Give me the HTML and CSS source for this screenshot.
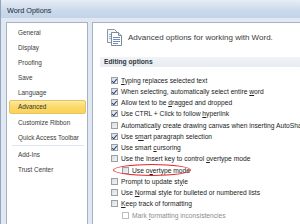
FILE: index.html
```html
<!DOCTYPE html>
<html>
<head>
<meta charset="utf-8">
<link rel="stylesheet" href="styles.css">
</head>
<body>
<div class="window">
  <div class="titlebar"><span class="title">Word Options</span></div>
  <div class="body">
    <nav class="nav">
      <div class="item">General</div>
      <div class="item">Display</div>
      <div class="item">Proofing</div>
      <div class="item">Save</div>
      <div class="item">Language</div>
      <div class="item active">Advanced</div>
      <div class="item">Customize Ribbon</div>
      <div class="item">Quick Access Toolbar</div>
      <div class="sep"></div>
      <div class="item">Add-Ins</div>
      <div class="item">Trust Center</div>
    </nav>
    <main class="pane">
      <div class="head">
        <svg class="docicon" width="17" height="19" viewBox="0 0 17 19">
          <path d="M1.5 1.5h7l3 3v10h-10z" fill="#f4f6f9" stroke="#8c96a4"/>
          <path d="M5.5 4.5h7l3 3v10h-10z" fill="#ffffff" stroke="#7d8898"/>
          <path d="M12.5 4.5v3h3" fill="#e6eaf0" stroke="#7d8898"/>
          <path d="M7 9.5h7M7 11.5h7M7 13.5h7M7 15.5h5" stroke="#6f8fc0" stroke-width="1"/>
          <path d="M3 6.5h2M3 8.5h2M3 10.5h2" stroke="#9fb2cf" stroke-width="1"/>
        </svg>
        <span class="headtext">Advanced options for working with Word.</span>
      </div>
      <div class="section">Editing options</div>
      <ul class="opts">
        <li class="opt"><span class="cb on"></span><span><u>T</u>yping replaces selected text</span></li>
        <li class="opt"><span class="cb on"></span><span>When selecting, automatically select entire <u>w</u>ord</span></li>
        <li class="opt"><span class="cb on"></span><span>Allow text to be <u>d</u>ragged and dropped</span></li>
        <li class="opt"><span class="cb on"></span><span>Use CTRL + Click to follow <u>h</u>yperlink</span></li>
        <li class="opt"><span class="cb"></span><span>Automatical<u>l</u>y create drawing canvas when inserting AutoShapes</span></li>
        <li class="opt"><span class="cb on"></span><span>Use s<u>m</u>art paragraph selection</span></li>
        <li class="opt"><span class="cb on"></span><span>Use smart <u>c</u>ursoring</span></li>
        <li class="opt"><span class="cb"></span><span>Use the Insert key to control <u>o</u>vertype mode</span></li>
        <li class="opt sub circled"><span class="cb"></span><span>Use o<u>v</u>ertype mode</span><span class="ring"></span></li>
        <li class="opt"><span class="cb"></span><span>Prompt to update st<u>y</u>le</span></li>
        <li class="opt"><span class="cb"></span><span>Use <u>N</u>ormal style for bulleted or numbered lists</span></li>
        <li class="opt"><span class="cb"></span><span><u>K</u>eep track of formatting</span></li>
        <li class="opt sub disabled"><span class="cb off"></span><span>Mark <u>f</u>ormatting inconsistencies</span></li>
      </ul>
    </main>
  </div>
</div>
</body>
</html>
```

FILE: styles.css
```css
html, body {
  margin: 0;
  padding: 0;
}
body {
  width: 300px;
  height: 224px;
  overflow: hidden;
  font-family: "Liberation Sans", Arial, sans-serif;
}
.window {
  width: 300px;
  height: 224px;
  display: flex;
  flex-direction: column;
  background: #e1e8f2;
  border-left: 1px solid #92a5bf;
  box-sizing: border-box;
  overflow: hidden;
}
.titlebar {
  height: 18px;
  flex: none;
  background: linear-gradient(#e6edf6, #cbd9eb 60%, #c2d3e9);
  display: flex;
  align-items: center;
  padding-left: 6px;
  padding-top: 3px;
  box-sizing: border-box;
}
.title {
  font-size: 7.3px;
  color: #1e2a3a;
}
.body {
  flex: 1;
  display: flex;
  gap: 4px;
  padding: 4px 0 0 5px;
  min-height: 0;
}
.nav {
  width: 82px;
  flex: none;
  background: #ffffff;
  border: 1px solid #a3b2c6;
  border-bottom: none;
  box-sizing: border-box;
  padding-top: 1px;
}
.item {
  height: 14px;
  margin: 1px 1px 1px 2px;
  padding-left: 8px;
  font-size: 6.4px;
  line-height: 14px;
  color: #3b3b3b;
  white-space: nowrap;
  box-sizing: border-box;
  border: 1px solid transparent;
  border-radius: 2px;
}
.item.active {
  background: linear-gradient(#fdeaa0, #fbd968 50%, #f9d45a);
  border-color: #e5c365;
  line-height: 12px;
  color: #333;
}
.sep {
  height: 1px;
  margin: 1px 3px 0 5px;
  background: #dde6f1;
}
.pane {
  flex: 1;
  background: #ffffff;
  border: 1px solid #a3b2c6;
  border-right: none;
  border-bottom: none;
  padding: 4px 0 0 7px;
  min-width: 0;
  overflow: hidden;
}
.head {
  height: 20px;
  display: flex;
  align-items: center;
  gap: 5px;
  padding-left: 6px;
}
.docicon {
  flex: none;
}
.headtext {
  font-size: 8px;
  color: #3a3a3a;
  white-space: nowrap;
}
.section {
  margin-top: 10px;
  height: 10px;
  line-height: 10px;
  padding-left: 4px;
  background: linear-gradient(#f1f3f6, #e8ecf1);
  font-size: 6.7px;
  font-weight: bold;
  color: #2f3640;
  white-space: nowrap;
}
.opts {
  list-style: none;
  margin: 7.4px 0 0 0;
  padding: 0;
}
.opt {
  position: relative;
  height: 11.25px;
  display: flex;
  align-items: center;
  gap: 3px;
  padding-left: 11px;
  font-size: 6.7px;
  color: #222;
  white-space: nowrap;
}
.opt.sub {
  padding-left: 22px;
}
.opt.disabled {
  color: #8d8d8d;
}
.cb {
  width: 7px;
  height: 7px;
  flex: none;
  box-sizing: border-box;
  border: 1px solid #9aa0a8;
  background: linear-gradient(135deg, #d9dce0, #f2f3f5);
  position: relative;
}
.cb.on::after {
  content: "";
  position: absolute;
  left: 1px;
  top: 0px;
  width: 2px;
  height: 3.5px;
  border-right: 1px solid #27407a;
  border-bottom: 1px solid #27407a;
  transform: rotate(40deg);
}
.cb.off {
  background: #ffffff;
  border-color: #b9bdc3;
}
.ring {
  position: absolute;
  left: 13px;
  top: -0.5px;
  width: 78px;
  height: 12px;
  border: 1px solid #e32626;
  border-radius: 50%;
  box-sizing: border-box;
}
```
